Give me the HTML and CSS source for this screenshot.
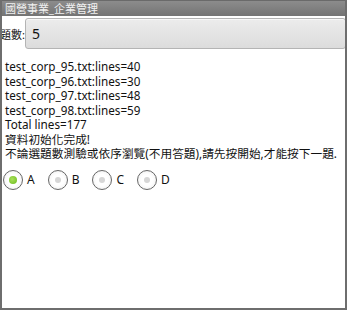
FILE: index.html
```html
<!DOCTYPE html>
<html lang="zh-Hant">
<head>
    <meta charset="UTF-8">
    <title>國營事業_企業管理</title>
    <link rel="stylesheet" href="styles.css">
</head>
<body>
    <div class="window">
        <div class="title-bar">國營事業_企業管理</div>

        <div class="count-row">
            <label class="count-label" for="count">題數:</label>
            <div class="count-input" id="count">5</div>
        </div>

        <div class="log">
            <div>test_corp_95.txt:lines=40</div>
            <div>test_corp_96.txt:lines=30</div>
            <div>test_corp_97.txt:lines=48</div>
            <div>test_corp_98.txt:lines=59</div>
            <div>Total lines=177</div>
            <div>資料初始化完成!</div>
            <div>不論選題數測驗或依序瀏覽(不用答題),請先按開始,才能按下一題.</div>
        </div>

        <div class="options">
            <div class="option"><span class="radio checked"></span>A</div>
            <div class="option"><span class="radio"></span>B</div>
            <div class="option"><span class="radio"></span>C</div>
            <div class="option"><span class="radio"></span>D</div>
        </div>
    </div>
</body>
</html>
```

FILE: styles.css
```css
html, body {
    margin: 0;
    padding: 0;
    background-color: #fff;
}

body {
    font-family: 'Noto Sans', 'Noto Sans CJK TC', sans-serif;
    color: #111;
}

.window {
    width: 347px;
    height: 310px;
    box-sizing: border-box;
    border-left: 2px solid #6e6e6e;
    border-right: 2px solid #6e6e6e;
    border-bottom: 2px solid #6e6e6e;
    display: flex;
    flex-direction: column;
    overflow: hidden;
}

.title-bar {
    height: 16px;
    margin: 0 -2px;
    padding-left: 5px;
    background: linear-gradient(#8c8c8c, #747474);
    border-top: 1px solid #6a6a6a;
    box-sizing: border-box;
    color: #f2f2f2;
    font-size: 11px;
    line-height: 15px;
}

.count-row {
    display: flex;
    align-items: center;
    padding: 1px 0 0 0;
    height: 33px;
}

.count-label {
    font-size: 11px;
    margin-left: -2px;
    width: 25px;
}

.count-input {
    flex: 1;
    height: 31px;
    box-sizing: border-box;
    border: 1px solid #b4b4b4;
    border-radius: 3px;
    background: linear-gradient(#ececec, #dcdcdc);
    box-shadow: inset 0 1px 0 #f8f8f8;
    font-size: 14px;
    line-height: 29px;
    padding-left: 6px;
    margin-right: -1px;
}

.log {
    padding: 9px 0 0 3px;
    font-size: 11.7px;
    line-height: 14.5px;
    white-space: nowrap;
}

.options {
    display: flex;
    gap: 13px;
    padding: 9px 0 0 1px;
}

.option {
    display: flex;
    align-items: center;
    font-size: 12px;
    gap: 4px;
}

.radio {
    width: 18px;
    height: 18px;
    border: 1px solid #666;
    border-radius: 50%;
    background: radial-gradient(circle, #fff 45%, #eaeaea 100%);
    position: relative;
}

.radio::after {
    content: '';
    position: absolute;
    left: 6px;
    top: 6px;
    width: 6px;
    height: 6px;
    border-radius: 50%;
    background: #d6d6d6;
}

.radio.checked::after {
    left: 5px;
    top: 5px;
    width: 8px;
    height: 8px;
    background: radial-gradient(circle at 40% 40%, #a8e05a, #6cbb1c);
}
```
